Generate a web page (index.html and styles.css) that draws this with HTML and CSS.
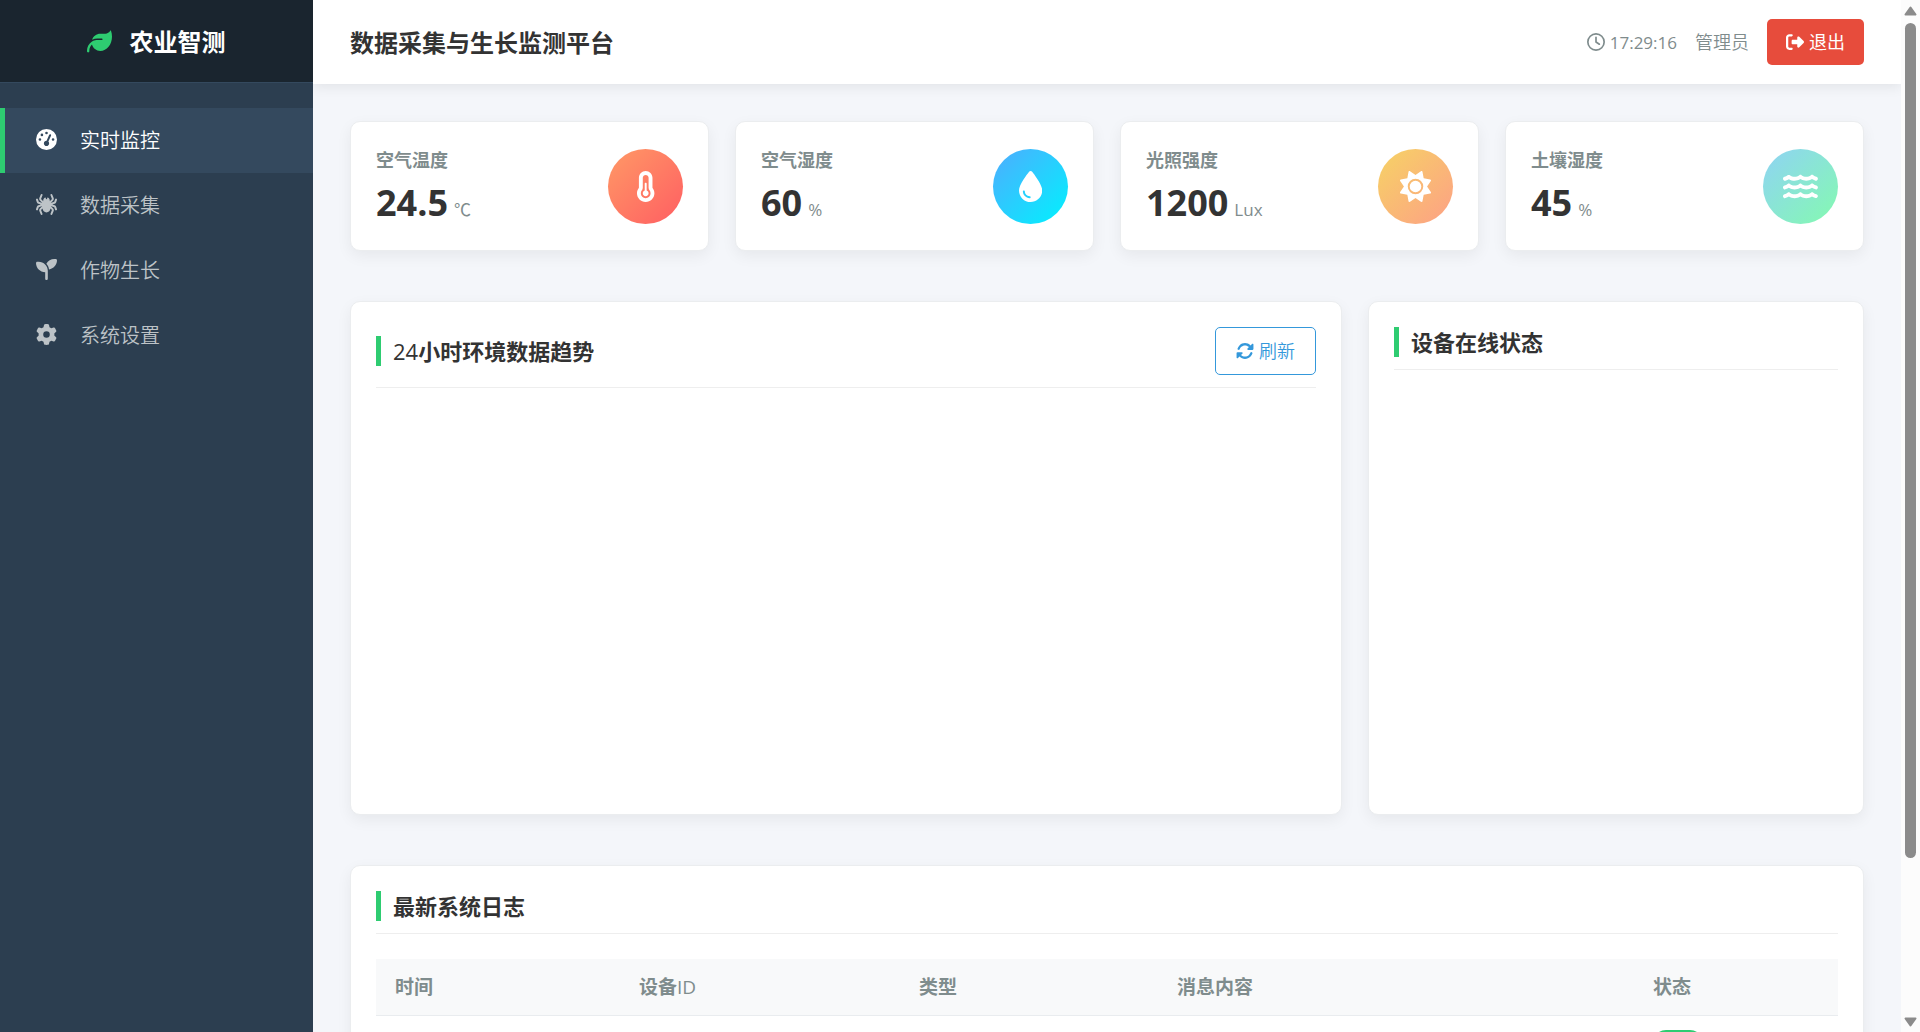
FILE: index.html
```html
<!DOCTYPE html>
<html lang="zh-CN">
<head>
<meta charset="utf-8">
<title>数据采集与生长监测平台</title>
<link rel="stylesheet" href="styles.css">
</head>
<body>
<nav class="sidebar">
  <div class="brand">
    <svg class="brand-icon" viewBox="0 0 512 512"><path d="M272 96c-78.6 0-145.1 51.5-167.7 122.5c33.6-17 71.5-26.5 111.7-26.5l88 0c8.8 0 16 7.2 16 16s-7.2 16-16 16l-16 0-72 0c-16.6 0-32.7 1.9-48.3 5.4c-25.9 5.9-49.9 16.4-71.4 30.7C38.3 298.8 0 364.9 0 440l0 16c0 13.3 10.7 24 24 24s24-10.7 24-24l0-16c0-48.7 20.7-92.5 53.8-123.2C121.6 392.3 190.3 448 272 448l1 0c132.1-.7 239-130.9 239-291.4c0-42.6-7.5-83.1-21.1-119.6c-2.6-6.9-12.7-6.6-16.2-.1C455.9 72.1 418.7 96 376 96L272 96z"/></svg>
    <span>农业智测</span>
  </div>
  <ul class="menu">
    <li><a class="menu-link active" href="#monitor"><svg class="menu-icon" viewBox="0 0 512 512"><path d="M0 256a256 256 0 1 1 512 0A256 256 0 1 1 0 256zM288 96a32 32 0 1 0 -64 0 32 32 0 1 0 64 0zM256 416c35.3 0 64-28.7 64-64c0-17.4-6.9-33.1-18.1-44.6L366 161.7c5.3-12.1-.2-26.3-12.3-31.6s-26.3 .2-31.6 12.3L257.9 288c-.6 0-1.3 0-1.9 0c-35.3 0-64 28.7-64 64s28.7 64 64 64zM176 144a32 32 0 1 0 -64 0 32 32 0 1 0 64 0zM96 288a32 32 0 1 0 0-64 32 32 0 1 0 0 64zm352-32a32 32 0 1 0 -64 0 32 32 0 1 0 64 0z"/></svg><span>实时监控</span></a></li>
    <li><a class="menu-link" href="#collect"><svg class="menu-icon" viewBox="0 0 512 512"><path d="M158.4 32.6c4.8-12.4-1.4-26.3-13.8-31s-26.3 1.4-31 13.8L81.1 100c-7.9 20.7-3 44.1 12.7 59.7l57.4 57.4L70.8 190.3c-2.4-.8-4.3-2.7-5.1-5.1L46.8 128.4C42.6 115.8 29 109 16.4 113.2S-3 131 1.2 143.6l18.9 56.8c5.6 16.7 18.7 29.8 35.4 35.4L116.1 256 55.6 276.2c-16.7 5.6-29.8 18.7-35.4 35.4L1.2 368.4C-3 381 3.8 394.6 16.4 398.8s26.2-2.6 30.4-15.2l18.9-56.8c.8-2.4 2.7-4.3 5.1-5.1l80.4-26.8L93.7 352.3C78.1 368 73.1 391.4 81.1 412l32.5 84.6c4.8 12.4 18.6 18.5 31 13.8s18.5-18.6 13.8-31l-32.5-84.6c-1.1-3-.4-6.3 1.8-8.5L160 353.9c1 52.1 43.6 94.1 96 94.1s95-41.9 96-94.1l32.3 32.3c2.2 2.2 2.9 5.6 1.8 8.5l-32.5 84.6c-4.8 12.4 1.4 26.3 13.8 31s26.3-1.4 31-13.8L430.9 412c7.9-20.7 3-44.1-12.7-59.7l-57.4-57.4 80.4 26.8c2.4 .8 4.3 2.7 5.1 5.1l18.9 56.8c4.2 12.6 17.8 19.4 30.4 15.2s19.4-17.8 15.2-30.4l-18.9-56.8c-5.6-16.7-18.7-29.8-35.4-35.4L395.9 256l60.5-20.2c16.7-5.6 29.8-18.7 35.4-35.4l18.9-56.8c4.2-12.6-2.6-26.2-15.2-30.4s-26.2 2.6-30.4 15.2l-18.9 56.8c-.8 2.4-2.7 4.3-5.1 5.1l-80.4 26.8 57.4-57.4c15.6-15.6 20.6-39 12.7-59.7L398.4 15.4C393.6 3 379.8-3.2 367.4 1.6s-18.5 18.6-13.8 31l32.5 84.6c1.1 3 .4 6.3-1.8 8.5L336 174.1V160c0-31.8-18.6-59.3-45.5-72.2c-9.1-4.4-18.5 3.3-18.5 13.4V112c0 8.8-7.2 16-16 16s-16-7.2-16-16V101.2c0-10.1-9.4-17.7-18.5-13.4C194.6 100.7 176 128.2 176 160v14.1l-48.3-48.3c-2.2-2.2-2.9-5.6-1.8-8.5l32.5-84.6z"/></svg><span>数据采集</span></a></li>
    <li><a class="menu-link" href="#growth"><svg class="menu-icon" viewBox="0 0 512 512"><path d="M512 32c0 113.6-84.6 207.5-194.2 222c-7.1-53.4-30.6-101.6-65.3-139.3C290.8 46.3 364 0 448 0l32 0c17.7 0 32 14.3 32 32zM0 96C0 78.3 14.3 64 32 64l32 0c123.7 0 224 100.3 224 224l0 32 0 160c0 17.7-14.3 32-32 32s-32-14.3-32-32l0-160C100.3 320 0 219.7 0 96z"/></svg><span>作物生长</span></a></li>
    <li><a class="menu-link" href="#settings"><svg class="menu-icon" viewBox="0 0 512 512"><path d="M495.9 166.6c3.2 8.7 .5 18.4-6.4 24.6l-43.3 39.4c1.1 8.3 1.7 16.8 1.7 25.4s-.6 17.1-1.7 25.4l43.3 39.4c6.9 6.2 9.6 15.9 6.4 24.6c-4.4 11.9-9.7 23.3-15.8 34.3l-4.7 8.1c-6.6 11-14 21.4-22.1 31.2c-5.9 7.2-15.7 9.6-24.5 6.8l-55.7-17.7c-13.4 10.3-28.2 18.9-44 25.4l-12.5 57.1c-2 9.1-9 16.3-18.2 17.8c-13.8 2.3-28 3.5-42.5 3.5s-28.7-1.2-42.5-3.5c-9.2-1.5-16.2-8.7-18.2-17.8l-12.5-57.1c-15.8-6.5-30.6-15.1-44-25.4L83.1 425.9c-8.8 2.8-18.6 .3-24.5-6.8c-8.1-9.8-15.5-20.2-22.1-31.2l-4.7-8.1c-6.1-11-11.4-22.4-15.8-34.3c-3.2-8.7-.5-18.4 6.4-24.6l43.3-39.4C64.6 273.1 64 264.6 64 256s.6-17.1 1.7-25.4L22.4 191.2c-6.9-6.2-9.6-15.9-6.4-24.6c4.4-11.9 9.7-23.3 15.8-34.3l4.7-8.1c6.6-11 14-21.4 22.1-31.2c5.9-7.2 15.7-9.6 24.5-6.8l55.7 17.7c13.4-10.3 28.2-18.9 44-25.4l12.5-57.1c2-9.1 9-16.3 18.2-17.8C227.3 1.2 241.5 0 256 0s28.7 1.2 42.5 3.5c9.2 1.5 16.2 8.7 18.2 17.8l12.5 57.1c15.8 6.5 30.6 15.1 44 25.4l55.7-17.7c8.8-2.8 18.6-.3 24.5 6.8c8.1 9.8 15.5 20.2 22.1 31.2l4.7 8.1c6.1 11 11.4 22.4 15.8 34.3zM256 336a80 80 0 1 0 0-160 80 80 0 1 0 0 160z"/></svg><span>系统设置</span></a></li>
  </ul>
</nav>

<main class="main">
  <header class="topbar">
    <h1 class="page-title">数据采集与生长监测平台</h1>
    <div class="user-area">
      <span class="clock"><svg class="icon" viewBox="0 0 512 512"><path d="M464 256A208 208 0 1 1 48 256a208 208 0 1 1 416 0zM0 256a256 256 0 1 0 512 0A256 256 0 1 0 0 256zM232 120l0 136c0 8 4 15.5 10.7 20l96 64c11 7.4 25.9 4.4 33.3-6.7s4.4-25.9-6.7-33.3L280 243.2 280 120c0-13.3-10.7-24-24-24s-24 10.7-24 24z"/></svg><time>17:29:16</time></span>
      <span>管理员</span>
      <button class="btn btn-danger" type="button"><svg class="icon" viewBox="0 0 512 512"><path d="M377.9 105.9L500.7 228.7c7.2 7.2 11.3 17.1 11.3 27.3s-4.1 20.1-11.3 27.3L377.9 406.1c-6.4 6.4-15 9.9-24 9.9c-18.7 0-33.9-15.2-33.9-33.9l0-62.1-128 0c-17.7 0-32-14.3-32-32l0-64c0-17.7 14.3-32 32-32l128 0 0-62.1c0-18.7 15.2-33.9 33.9-33.9c9 0 17.6 3.6 24 9.9zM160 96L96 96c-17.7 0-32 14.3-32 32l0 256c0 17.7 14.3 32 32 32l64 0c17.7 0 32 14.3 32 32s-14.3 32-32 32l-64 0c-53 0-96-43-96-96L0 128C0 75 43 32 96 32l64 0c17.7 0 32 14.3 32 32s-14.3 32-32 32z"/></svg>退出</button>
    </div>
  </header>

  <div class="content">
    <section class="stats">
      <article class="card stat">
        <div><h2 class="stat-label">空气温度</h2><p class="stat-value">24.5 <span class="unit">℃</span></p></div>
        <div class="stat-icon temp"><svg viewBox="0 0 320 512"><path d="M160 64c-26.5 0-48 21.5-48 48l0 164.5c0 17.3-7.1 31.9-15.3 42.5C86.2 332.6 80 349.5 80 368c0 44.2 35.8 80 80 80s80-35.8 80-80c0-18.5-6.2-35.4-16.7-48.9c-8.2-10.6-15.3-25.2-15.3-42.5L208 112c0-26.5-21.5-48-48-48zM48 112C48 50.2 98.1 0 160 0s112 50.1 112 112l0 164.5c0 .1 .1 .3 .2 .6c.2 .6 .8 1.6 1.7 2.8c18.9 24.4 30.1 55 30.1 88.1c0 79.5-64.5 144-144 144S16 447.5 16 368c0-33.2 11.2-63.8 30.1-88.1c.9-1.2 1.5-2.2 1.7-2.8c.1-.3 .2-.5 .2-.6L48 112zM208 368c0 26.5-21.5 48-48 48s-48-21.5-48-48c0-20.9 13.4-38.7 32-45.3L144 208c0-8.8 7.2-16 16-16s16 7.2 16 16l0 114.7c18.6 6.6 32 24.4 32 45.3z"/></svg></div>
      </article>
      <article class="card stat">
        <div><h2 class="stat-label">空气湿度</h2><p class="stat-value">60 <span class="unit">%</span></p></div>
        <div class="stat-icon humidity"><svg viewBox="0 0 384 512"><path d="M192 512C86 512 0 426 0 320C0 228.8 130.2 57.7 166.6 11.7C172.6 4.2 181.5 0 191.1 0l1.8 0c9.6 0 18.5 4.2 24.5 11.7C253.8 57.7 384 228.8 384 320c0 106-86 192-192 192zM96 336c0-8.8-7.2-16-16-16s-16 7.2-16 16c0 61.9 50.1 112 112 112c8.8 0 16-7.2 16-16s-7.2-16-16-16c-44.2 0-80-35.8-80-80z"/></svg></div>
      </article>
      <article class="card stat">
        <div><h2 class="stat-label">光照强度</h2><p class="stat-value">1200 <span class="unit">Lux</span></p></div>
        <div class="stat-icon light"><svg viewBox="0 0 512 512"><path d="M361.5 1.2c5 2.1 8.6 6.6 9.6 11.9L391 121l107.9 19.8c5.3 1 9.8 4.6 11.9 9.6s1.5 10.7-1.6 15.2L446.9 256l62.3 90.3c3.1 4.5 3.7 10.2 1.6 15.2s-6.6 8.6-11.9 9.6L391 391 371.1 498.9c-1 5.3-4.6 9.8-9.6 11.9s-10.7 1.5-15.2-1.6L256 446.9l-90.3 62.3c-4.5 3.1-10.2 3.7-15.2 1.6s-8.6-6.6-9.6-11.9L121 391 13.1 371.1c-5.3-1-9.8-4.6-11.9-9.6s-1.5-10.7 1.6-15.2L65.1 256 2.8 165.7c-3.1-4.5-3.7-10.2-1.6-15.2s6.6-8.6 11.9-9.6L121 121 140.9 13.1c1-5.3 4.6-9.8 9.6-11.9s10.7-1.5 15.2 1.6L256 65.1 346.3 2.8c4.5-3.1 10.2-3.7 15.2-1.6zM160 256a96 96 0 1 1 192 0 96 96 0 1 1 -192 0zm224 0a128 128 0 1 0 -256 0 128 128 0 1 0 256 0z"/></svg></div>
      </article>
      <article class="card stat">
        <div><h2 class="stat-label">土壤湿度</h2><p class="stat-value">45 <span class="unit">%</span></p></div>
        <div class="stat-icon soil"><svg viewBox="0 0 576 512"><path id="wave" d="M269.5 69.9c11.1-7.9 25.9-7.9 37 0C329 85.4 356.5 96 384 96c26.9 0 55.4-10.8 77.4-26.1c11.9-8.5 28.1-7.8 39.2 1.7c14.4 11.9 32.5 21 50.6 25.2c17.2 4 27.9 21.2 23.9 38.4s-21.2 27.9-38.4 23.9c-24.5-5.7-44.9-16.5-58.2-25C449.5 149.7 417 160 384 160c-31.9 0-60.6-9.9-80.4-18.9c-5.8-2.7-11.1-5.3-15.6-7.7c-4.5 2.4-9.7 5.1-15.6 7.7c-19.8 9-48.5 18.9-80.4 18.9c-33 0-65.5-10.3-94.5-25.8c-13.4 8.4-33.7 19.3-58.2 25c-17.2 4-34.4-6.7-38.4-23.9s6.7-34.4 23.9-38.4C42.8 92.6 61 83.5 75.3 71.6c11.1-9.5 27.3-10.1 39.2-1.7C136.7 85.2 165.1 96 192 96c27.5 0 55-10.6 77.5-26.1z"/><use href="#wave" y="144"/><use href="#wave" y="288"/></svg></div>
      </article>
    </section>

    <section class="charts">
      <article class="card chart-card">
        <div class="card-header">
          <h2 class="card-title"><span class="latin">24</span>小时环境数据趋势</h2>
          <button class="btn btn-outline" type="button"><svg class="icon" viewBox="0 0 512 512"><path d="M142.9 142.9c-17.5 17.5-30.1 38-37.8 59.8c-5.9 16.7-24.2 25.4-40.8 19.5s-25.4-24.2-19.5-40.8C55.6 150.7 73.2 122 97.6 97.6c87.2-87.2 228.3-87.5 315.8-1L455 55c6.9-6.9 17.2-8.9 26.2-5.2s14.8 12.5 14.8 22.2l0 128c0 13.3-10.7 24-24 24l-8.4 0L344 224c-9.7 0-18.5-5.8-22.2-14.8s-1.7-19.3 5.2-26.2l41.1-41.1c-62.6-61.5-163.1-61.2-225.3 1zM16 312c0-13.3 10.7-24 24-24l7.6 0 .7 0L168 288c9.7 0 18.5 5.8 22.2 14.8s1.7 19.3-5.2 26.2l-41.1 41.1c62.6 61.5 163.1 61.2 225.3-1c17.5-17.5 30.1-38 37.8-59.8c5.9-16.7 24.2-25.4 40.8-19.5s25.4 24.2 19.5 40.8c-10.8 30.6-28.4 59.3-52.9 83.8c-87.2 87.2-228.3 87.5-315.8 1L57 457c-6.9 6.9-17.2 8.9-26.2 5.2S16 449.7 16 440l0-119.6 0-.7 0-7.6z"/></svg>刷新</button>
        </div>
        <div class="chart"></div>
      </article>
      <article class="card chart-card">
        <div class="card-header"><h2 class="card-title">设备在线状态</h2></div>
      </article>
    </section>

    <section class="card">
      <div class="card-header"><h2 class="card-title">最新系统日志</h2></div>
      <table class="log">
        <colgroup><col class="col-time"><col class="col-device"><col class="col-type"><col class="col-message"><col class="col-status"></colgroup>
        <thead><tr><th>时间</th><th>设备<span class="latin">ID</span></th><th>类型</th><th>消息内容</th><th>状态</th></tr></thead>
        <tbody><tr><td></td><td></td><td></td><td></td><td><span class="badge"></span></td></tr></tbody>
      </table>
    </section>
  </div>
</main>

<div class="scrollbar" aria-hidden="true">
  <svg class="arrow" viewBox="0 0 13 10"><path d="M6.5 1.5L11.5 8.5H1.5z"/></svg>
  <div class="track"><div class="thumb"></div></div>
  <svg class="arrow" viewBox="0 0 13 10"><path d="M6.5 8.5L1.5 1.5H11.5z"/></svg>
</div>
</body>
</html>
```
FILE: styles.css
```css
* {
  box-sizing: border-box;
  margin: 0;
  padding: 0;
}

body {
  display: flex;
  height: 100vh;
  overflow: hidden;
  background: #f4f6fa;
  color: #333;
  font: 18px/27px "Open Sans", "Noto Sans CJK SC", sans-serif;
}

svg {
  display: block;
  fill: currentColor;
}

/* Sidebar */
.sidebar {
  flex: 0 0 313px;
  background: #2c3e50;
}

.brand {
  display: flex;
  align-items: center;
  justify-content: center;
  gap: 18px;
  height: 83px;
  padding-right: 1px;
  border-bottom: 1px solid #34495e;
  background: #1a252f;
  color: #fff;
  font-size: 24px;
  font-weight: 700;
}

.brand-icon {
  width: 25px;
  height: 25px;
  color: #2ecc71;
}

.menu {
  padding-top: 25px;
  list-style: none;
}

.menu-link {
  display: flex;
  align-items: center;
  gap: 23px;
  height: 65px;
  padding-left: 31px;
  border-left: 5px solid transparent;
  color: #bdc3c7;
  font-size: 20px;
  font-weight: 350;
  text-decoration: none;
}

.menu-link.active {
  border-left-color: #2ecc71;
  background: #34495e;
  color: #fff;
}

.menu-icon {
  width: 21px;
  height: 21px;
  margin-bottom: 3px;
}

/* Main column */
.main {
  flex: 1;
  min-width: 0;
  overflow-y: auto;
  scrollbar-width: none;
}

.topbar {
  display: flex;
  align-items: center;
  justify-content: space-between;
  height: 84px;
  padding: 0 37px;
  background: #fff;
  box-shadow: 0 3px 12px rgba(0, 0, 0, 0.08);
}

.page-title {
  font-size: 24px;
  font-weight: 700;
}

.user-area {
  display: flex;
  align-items: center;
  gap: 18px;
  color: #7f8c8d;
  font-weight: 350;
}

.clock {
  display: flex;
  align-items: center;
  gap: 5px;
}

.clock time {
  font-size: 17px;
  font-weight: 400;
}

.icon {
  width: 18px;
  height: 18px;
}

.btn {
  display: flex;
  align-items: center;
  gap: 5px;
  border: 1px solid transparent;
  border-radius: 5px;
  font: inherit;
  font-weight: 400;
}

.btn-danger {
  height: 46px;
  padding: 0 18px;
  background: #e74c3c;
  color: #fff;
}

.btn-outline {
  height: 48px;
  padding: 0 20px;
  border-color: #3498db;
  background: transparent;
  color: #3498db;
  font-weight: 350;
}

.content {
  display: grid;
  gap: 50px;
  padding: 37px;
}

.card {
  padding: 25px;
  border: 1px solid #ebedef;
  border-radius: 10px;
  background: #fff;
  box-shadow: 0 5px 15px rgba(0, 0, 0, 0.06);
}

/* Readings */
.stats {
  display: grid;
  grid-template-columns: repeat(4, 1fr);
  gap: 26px;
}

.stat {
  display: flex;
  align-items: center;
  justify-content: space-between;
}

.stat-label {
  margin-bottom: 11px;
  color: #7f8c8d;
  font-size: 18px;
  font-weight: 700;
  line-height: 26px;
}

.stat-value {
  display: flex;
  align-items: baseline;
  gap: 6px;
  height: 41px;
  font-size: 36px;
  font-weight: 700;
  line-height: 38px;
}

.unit {
  color: #7f8c8d;
  font-size: 17px;
  font-weight: 400;
  line-height: 20px;
}

.stat-icon {
  display: grid;
  place-items: center;
  width: 75px;
  height: 75px;
  border-radius: 50%;
  color: #fff;
}

.stat-icon svg {
  height: 31px;
}

.temp {
  background: linear-gradient(135deg, #ff9966, #ff5e62);
}

.humidity {
  background: linear-gradient(135deg, #4facfe, #00f2fe);
}

.light {
  background: linear-gradient(135deg, #f6d365, #fda085);
}

.soil {
  background: linear-gradient(135deg, #8fd3f4, #84fab0);
}

/* Panels */
.charts {
  display: grid;
  grid-template-columns: 2fr 1fr;
  gap: 26px;
}

.card-header {
  display: flex;
  align-items: center;
  justify-content: space-between;
  margin-bottom: 25px;
  padding-bottom: 12px;
  border-bottom: 1px solid #eee;
}

.card-title {
  padding-left: 12px;
  border-left: 5px solid #2ecc71;
  font-size: 22px;
  font-weight: 700;
  line-height: 30px;
}

.latin {
  font-weight: 400;
}

.chart {
  height: 376px;
}

/* Log table */
.log {
  width: 100%;
  border-collapse: collapse;
  table-layout: fixed;
}

.col-time {
  width: 244px;
}

.col-device {
  width: 280px;
}

.col-type {
  width: 258px;
}

.col-message {
  width: 476px;
}

.col-status {
  width: 204px;
}

.log th,
.log td {
  padding: 14px 19px;
  border-bottom: 1px solid #e9ecef;
  text-align: left;
}

.log th {
  background: #f8f9fa;
  color: #7f8c8d;
  font-size: 19px;
  font-weight: 700;
  line-height: 28px;
}

.badge {
  display: block;
  width: 50px;
  height: 27px;
  border-radius: 13px;
  background: #2ecc71;
}

/* Scroll indicator */
.scrollbar {
  display: flex;
  flex: 0 0 19px;
  flex-direction: column;
  align-items: center;
  gap: 7px;
  padding: 6px 0 5px;
  background: #fcfcfc;
  color: #8b8b8b;
}

.arrow {
  width: 13px;
  height: 10px;
  stroke: currentColor;
  stroke-width: 2;
  stroke-linejoin: round;
}

.track {
  display: grid;
  flex: 1;
  grid-template-rows: 11fr 2fr;
  width: 11px;
}

.thumb {
  border-radius: 6px;
  background: #8b8b8b;
}
```
